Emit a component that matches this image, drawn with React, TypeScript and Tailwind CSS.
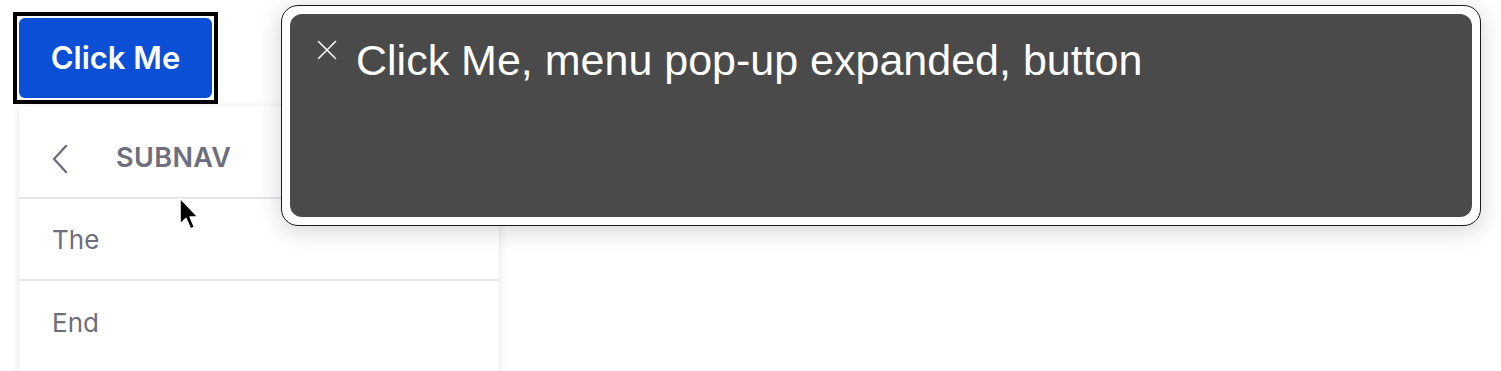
import React from "react";

const menuItems = ["The", "End"];

function Cursor() {
  return (
    <svg
      className="absolute left-[178px] top-[196px]"
      width="22"
      height="36"
      viewBox="0 0 22 36"
    >
      <path
        d="M2 2 L2 28 L8 22.5 L12.5 33 L16.5 31.2 L12.2 21 L20 21 Z"
        fill="#000"
        stroke="#fff"
        strokeWidth="1.6"
        strokeLinejoin="round"
      />
    </svg>
  );
}

export default function App() {
  return (
    <div className="relative w-[1501px] h-[371px] overflow-hidden bg-white pl-[13px] pt-[12px]">
      {/* ボタン（フォーカスリング付き） */}
      <div className="inline-block border-4 border-black p-[2px]">
        <button className="flex h-[80px] w-[193px] items-center justify-center rounded-md bg-[#0a4fd6] font-['Inter','Liberation_Sans',sans-serif] text-[31px] font-semibold text-white">
          Click Me
        </button>
      </div>

      {/* サブメニュー */}
      <div className="ml-[6px] mt-[2px] w-[480px] rounded-t-[4px] bg-white shadow-[0_2px_10px_rgba(0,0,0,0.12)] font-['Inter','Noto_Sans',sans-serif] text-[#6e6e7c]">
        <div className="flex h-[93px] items-center gap-[47px] border-b-2 border-[#e4e4ea] pl-[32px] pt-[14px]">
          <svg width="18" height="30" viewBox="0 0 18 30" fill="none">
            <path
              d="M15 2 L3 15 L15 28"
              stroke="#6e6e7c"
              strokeWidth="2.4"
              strokeLinecap="round"
              strokeLinejoin="round"
            />
          </svg>
          <span className="text-[27px] font-semibold tracking-[0.4px]">SUBNAV</span>
        </div>
        {menuItems.map((item, i) => (
          <div
            key={item}
            className={
              i < menuItems.length - 1
                ? "flex h-[82px] items-center border-b-2 border-[#e4e4ea] pl-[33px] text-[26px]"
                : "flex h-[120px] items-start pt-[22px] pl-[33px] text-[26px]"
            }
          >
            {item}
          </div>
        ))}
      </div>

      <Cursor />

      {/* 読み上げキャプションのポップアップ */}
      <div className="absolute left-[281px] top-[5px] h-[221px] w-[1200px] rounded-[17px] border border-[#1a1a1a] bg-white p-[8px] shadow-[0_4px_24px_rgba(0,0,0,0.18)]">
        <div className="flex h-full items-start gap-[18px] rounded-[12px] bg-[#4a4a4a] pl-[26px] pt-[22px] font-['Liberation_Sans',Arial,sans-serif] text-white">
          <svg className="mt-[4px]" width="22" height="20" viewBox="0 0 22 20" fill="none">
            <path d="M2 1 L20 19 M20 1 L2 19" stroke="#fff" strokeWidth="1.6" />
          </svg>
          <span className="text-[43px] leading-[48px]">Click Me, menu pop-up expanded, button</span>
        </div>
      </div>
    </div>
  );
}
